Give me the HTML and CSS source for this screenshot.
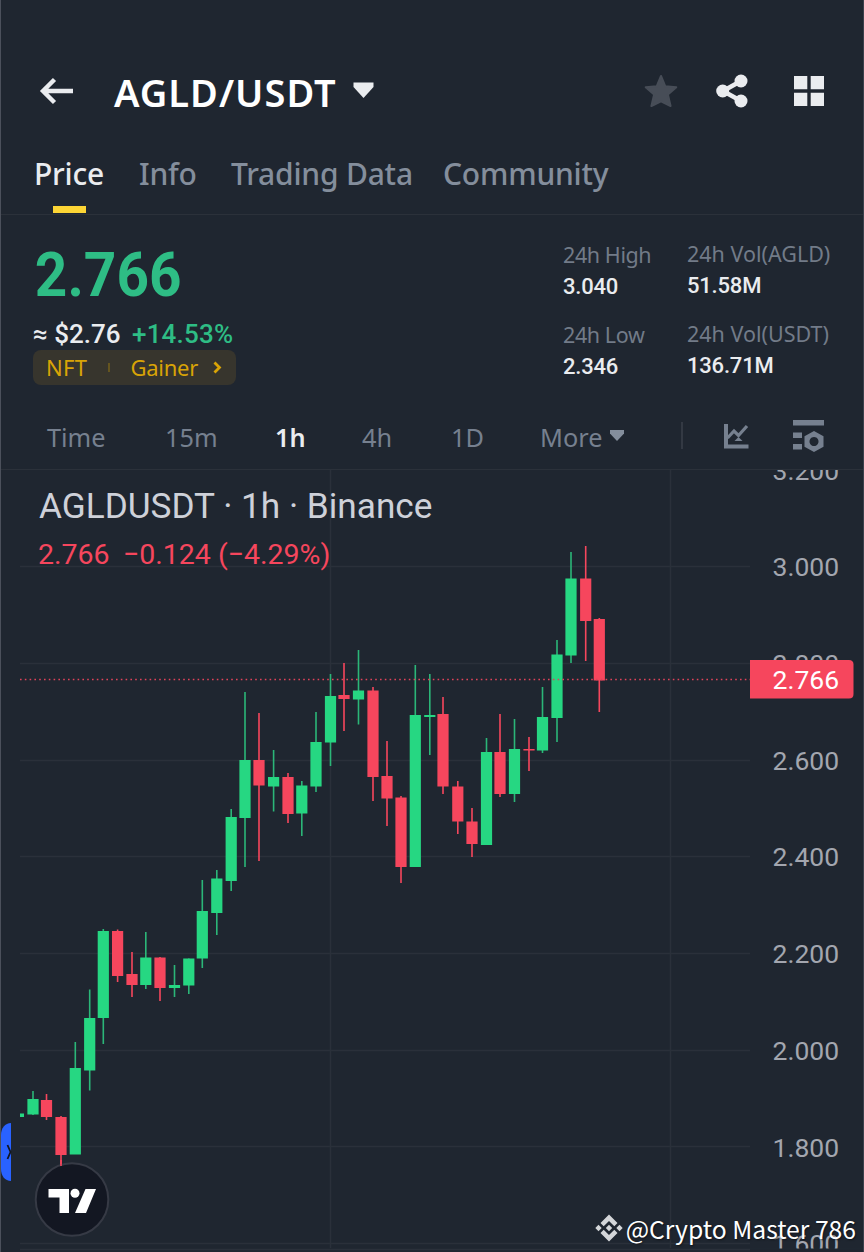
FILE: index.html
```html
<!DOCTYPE html>
<html lang="en">
<head>
    <meta charset="UTF-8">
    <meta name="viewport" content="width=device-width, initial-scale=1.0">
    <title>AGLD/USDT</title>
    <link rel="stylesheet" href="styles.css">
</head>
<body>
    <div class="app">
        <header class="header">
            <svg class="back" width="34" height="28" viewBox="0 0 34 28" fill="none" stroke="#eaecef" stroke-width="4.4">
                <path d="M34 14H4M15.500 2.500L4 14L15.500 25.500"/>
            </svg>
            <h1 class="pair">AGLD/USDT</h1>
            <svg class="caret" width="21" height="17" viewBox="0 0 21 17"><path d="M.5.500h20v4.500L10.500 16L.5 5z" fill="#eaecef"/></svg>
            <div class="actions">
                <svg width="34" height="34" viewBox="0 0 34 34"><path d="M17 2l4.300 10.300 11 .9-8.400 7.300 2.700 11.500L17 27.300 7.400 32l2.700-11.500L1.700 13.200l11-.9z" fill="#474d57" stroke="#474d57" stroke-width="2" stroke-linejoin="round"/></svg>
                <svg width="32" height="34" viewBox="0 0 32 34" fill="#eaecef"><path d="M25 7L7 17l18 10" fill="none" stroke="#eaecef" stroke-width="4.500"/><circle cx="25" cy="7" r="6.500"/><circle cx="6.700" cy="17" r="6.500"/><circle cx="25" cy="27" r="6.500"/></svg>
                <svg width="30" height="30" viewBox="0 0 30 30" fill="#eaecef"><path d="M0 0h13.300v13.300H0zM16.700 0H30v13.300H16.700zM0 16.700h13.300V30H0zM16.700 16.700H30V30H16.700z"/></svg>
            </div>
        </header>

        <nav class="tabs">
            <a class="tab tab-price active">Price</a>
            <a class="tab tab-info">Info</a>
            <a class="tab tab-data">Trading Data</a>
            <a class="tab tab-community">Community</a>
        </nav>

        <section class="ticker">
            <div class="quote">
                <div class="last">2.766</div>
                <div class="sub"><span class="approx">≈ $2.76</span><span class="change">+14.53%</span></div>
                <div class="tags">
                    <span class="nft">NFT</span>
                    <i class="tag-line"></i>
                    <span class="gainer">Gainer</span>
                    <svg width="9" height="13" viewBox="0 0 9 13"><path d="M1.500 1.500l5 5-5 5" fill="none" stroke="#d9a406" stroke-width="2.800"/></svg>
                </div>
            </div>
            <div class="stats">
                <div class="stat"><span class="label">24h High</span><span class="value">3.040</span></div>
                <div class="stat"><span class="label">24h Low</span><span class="value">2.346</span></div>
            </div>
            <div class="stats stats-vol">
                <div class="stat"><span class="label">24h Vol(AGLD)</span><span class="value">51.58M</span></div>
                <div class="stat"><span class="label">24h Vol(USDT)</span><span class="value">136.71M</span></div>
            </div>
        </section>

        <nav class="intervals">
            <span class="int int-time">Time</span>
            <span class="int int-15m">15m</span>
            <span class="int int-1h active">1h</span>
            <span class="int int-4h">4h</span>
            <span class="int int-1d">1D</span>
            <span class="int int-more">More</span>
            <svg class="more-caret" width="14" height="11" viewBox="0 0 14 11"><path d="M0 0h14v3.500L7 11 0 3.500z" fill="#848e9c"/></svg>
            <i class="divider"></i>
            <svg class="int-chart" width="25" height="26" viewBox="0 0 25 26"><path d="M2 1v22.500h22.500" fill="none" stroke="#76808f" stroke-width="4"/><path d="M3.500 15L10 8l4.500 4.500L23 3" fill="none" stroke="#76808f" stroke-width="3.200"/><path d="M14.500 14l4 4h-8z" fill="#76808f"/></svg>
            <svg class="int-settings" width="31" height="33" viewBox="0 0 31 33" fill="#76808f"><path d="M0 0h31v5.500H0zM0 12.500h9V18H0zM0 24h9v5.500H0z"/><path fill-rule="evenodd" d="M21 11l9.500 5.200v10.600L21 32l-9.500-5.200V16.200zM21 17a4.500 4.500 0 1 0 .01 0z"/></svg>
        </nav>

        <main class="chart-area">
            <svg class="chart" width="864" height="782" viewBox="0 470 864 782">
                <g class="grid">
                    <path d="M20 566.500H750M20 663.500H750M20 760.500H750M20 856.500H750M20 953.500H750M20 1050.500H750M20 1146.500H750M20 1243.500H750M20 1249.500H864"/>
                    <path d="M330.500 470V1248M670.500 470V1248"/>
                </g>
                <g class="axis">
                    <text x="772.500" y="480">3.200</text>
                    <text x="772.500" y="576">3.000</text>
                    <text x="772.500" y="673">2.800</text>
                    <text x="772.500" y="770">2.600</text>
                    <text x="772.500" y="866">2.400</text>
                    <text x="772.500" y="963">2.200</text>
                    <text x="772.500" y="1060">2.000</text>
                    <text x="772.500" y="1157">1.800</text>
                    <text x="772.500" y="1253">1.600</text>
                </g>
                <rect x="750" y="1248.500" width="114" height="4" fill="#1f2630"/>
                <g id="candles"></g>
                <path class="price-line" d="M20 679.500H750"/>
                <path d="M750 660h99q4.500 0 4.500 4.500v29.500q0 4.500-4.500 4.500h-99z" fill="#f6465d"/>
                <text class="price-tag" x="772.500" y="689">2.766</text>
                <text class="symbol" x="39" y="518">AGLDUSDT · 1h · Binance</text>
                <text class="delta" x="38" y="564">2.766</text>
                <text class="delta" x="123" y="564">−0.124 (−4.29%)</text>
                <path d="M11 1123v58C5 1181 1 1176 1 1169v-34C1 1128 5 1123 11 1123z" fill="#2962ff"/>
                <path d="M7.500 1145l3 7-3 7" fill="none" stroke="#131722" stroke-width="1.800"/>
                <circle cx="72" cy="1199.500" r="36.300" fill="#131722" stroke="#363a45" stroke-width="2"/>
                <g fill="#fff">
                    <path d="M48.500 1189H69v24H59.500v-15.500h-11zM85.500 1189H96l-10 24H75z"/>
                    <circle cx="75" cy="1193.300" r="4.500"/>
                </g>
                <path d="M61 1160v6" stroke="#f6465d" stroke-width="1.600"/>
            </svg>
            <div class="watermark">
                <svg width="28" height="28" viewBox="0 0 28 28" fill="#d4d6d9"><path d="M14 .5l8.500 8.500-3.200 3.200L14 6.900l-5.300 5.300L5.500 9zM14 27.500L5.500 19l3.200-3.200 5.300 5.300 5.300-5.300 3.200 3.200zM14 10.800l3.200 3.200-3.200 3.200-3.200-3.200zM3.500 10.800L6.700 14l-3.200 3.200L.3 14zM24.500 10.800l3.200 3.200-3.200 3.200-3.200-3.200z"/></svg>
                <span>@Crypto Master 786</span>
            </div>
        </main>
    </div>

    <script>
        // x, body top, body bottom, wick top, wick bottom, up
        const candles = [
            [33, 1099, 1114.5, 1091, 1115, 1],
            [46.5, 1100, 1117, 1094, 1120, 0],
            [61, 1117, 1155, 1116, 1166, 0],
            [75.3, 1068, 1154.5, 1042, 1154, 1],
            [89.7, 1018, 1070.5, 989.5, 1090.5, 1],
            [103.3, 931, 1018, 929, 1044, 1],
            [117.6, 931, 976, 929.5, 982, 0],
            [132, 974, 985, 952, 997, 0],
            [145.8, 957.5, 985, 932, 989, 1],
            [160, 957.5, 988, 957, 1001, 0],
            [174.5, 985, 988, 965, 997, 1],
            [188.8, 958.5, 985.5, 958.5, 994, 1],
            [202.3, 911, 958.5, 880, 968, 1],
            [216.8, 878.5, 913, 870, 935, 1],
            [231.2, 817, 881, 809, 891, 1],
            [245, 760, 818, 692, 867, 1],
            [259, 760, 785.5, 713, 861, 0],
            [273.6, 777, 786.5, 750, 811.5, 1],
            [288, 777, 814, 773, 823, 0],
            [301.8, 785.5, 813.5, 781, 836, 1],
            [316, 742, 786.5, 712, 792, 1],
            [330.5, 696, 742.5, 674, 766, 1],
            [344, 695, 699, 663, 731, 0],
            [358.5, 690.5, 699.5, 650, 724.5, 1],
            [373, 690.5, 777, 687, 801, 0],
            [387, 776, 798.5, 741, 826, 0],
            [401, 797.5, 867, 796, 883, 0],
            [415.3, 715, 867, 665, 867, 1],
            [429.8, 715, 717, 674, 755, 1],
            [443, 714, 786.5, 697, 794, 0],
            [457.8, 786.5, 821.5, 781, 834, 0],
            [472, 821.5, 844, 808, 857, 0],
            [486.5, 752, 845, 738, 845, 1],
            [500, 752, 794, 714, 797, 0],
            [514.5, 749, 794, 719, 802, 1],
            [529, 749, 750.5, 737, 771, 0],
            [542.5, 717, 750.5, 687, 753, 1],
            [557, 654.5, 718, 640, 742, 1],
            [571, 578.5, 655.5, 552, 663, 1],
            [585.7, 578.5, 621, 546, 661, 0],
            [599.3, 619, 680.5, 618, 712, 0]
        ];
        const group = document.getElementById('candles');

        function addRect(x, y, w, h, name) {
            const rect = document.createElementNS('http://www.w3.org/2000/svg', 'rect');
            rect.setAttribute('x', x);
            rect.setAttribute('y', y);
            rect.setAttribute('width', w);
            rect.setAttribute('height', h);
            rect.setAttribute('class', name);
            group.appendChild(rect);
        }

        // the first candle is cut off by the chart's left edge
        addRect(20, 1113.5, 4, 3.5, 'up');
        candles.forEach(([x, top, bottom, high, low, up]) => {
            const name = up ? 'up' : 'down';
            addRect(x - 0.8, high, 1.6, low - high, name + ' wick');
            addRect(x - 5.6, top, 11.2, bottom - top, name);
        });
    </script>
</body>
</html>
```
FILE: styles.css
```css
* {
    box-sizing: border-box;
}

body {
    margin: 0;
    background: #1f2630;
    color: #eaecef;
    font-family: "Noto Sans", sans-serif;
    overflow: hidden;
}

.app {
    width: 864px;
    height: 1252px;
    display: flex;
    flex-direction: column;
    border-left: 1px solid #4b505b;
    border-right: 1px solid #3b414c;
    overflow: hidden;
}

.header {
    height: 149px;
    padding: 32px 39px 0 38px;
    display: flex;
    align-items: center;
}

.pair {
    width: 222px;
    margin: 2px 0 0 41px;
    color: #fff;
    font-size: 38px;
    font-weight: 600;
    letter-spacing: 1px;
    line-height: 50px;
    white-space: nowrap;
}

.caret {
    margin-left: 17px;
}

.actions {
    display: flex;
    align-items: center;
    margin-left: auto;
}

.actions svg + svg {
    margin-left: 38px;
}

.actions svg:last-child {
    margin-left: 46px;
}

.tabs {
    height: 66px;
    padding-left: 33px;
    display: flex;
    border-bottom: 1px solid #2b313a;
    color: #848e9c;
    font-size: 30px;
    font-weight: 500;
    letter-spacing: -0.2px;
}

.tab {
    position: relative;
    line-height: 50px;
    white-space: nowrap;
}

.tab-price {
    width: 105px;
}

.tab-info {
    width: 92px;
}

.tab-data {
    width: 212px;
}

.tab.active {
    color: #eaecef;
}

.tab.active::after {
    content: "";
    position: absolute;
    left: 19px;
    bottom: 1px;
    width: 33px;
    height: 7px;
    background: #fcd535;
}

.ticker {
    height: 187px;
    padding: 24px 0 0 32px;
    display: flex;
}

.quote {
    width: 530px;
}

.last {
    height: 76px;
    padding-left: 2px;
    color: #2ebd85;
    font-family: Roboto, sans-serif;
    font-size: 61px;
    font-weight: 700;
    line-height: 72px;
    transform: scaleX(0.93);
    transform-origin: left;
}

.sub {
    height: 35px;
    font-family: Roboto, sans-serif;
    font-size: 26px;
    font-weight: 500;
    line-height: 38px;
    white-space: nowrap;
}

.approx {
    display: inline-block;
    width: 99px;
}

.change {
    color: #2ebd85;
    letter-spacing: 0.2px;
}

.tags {
    width: 203px;
    height: 35px;
    padding: 0 14px 1px 13px;
    display: flex;
    align-items: center;
    border-radius: 8px;
    background: #37352d;
    color: #d9a406;
    font-size: 22px;
    letter-spacing: -0.3px;
}

.nft {
    width: 62px;
    letter-spacing: 0.3px;
}

.tag-line {
    width: 2px;
    height: 9px;
    background: #65551f;
}

.gainer {
    width: 83px;
    margin-left: 21px;
}

.stats {
    width: 124px;
}

.stats-vol {
    position: relative;
    top: -1px;
}

.stat {
    height: 80px;
}

.label,
.value {
    display: block;
    height: 32px;
    line-height: 32px;
    font-size: 21.5px;
    white-space: nowrap;
}

.label {
    color: #727b88;
}

.stats:not(.stats-vol) .label {
    letter-spacing: -0.4px;
}

.value {
    font-family: Roboto, sans-serif;
    font-size: 22px;
    font-weight: 500;
    letter-spacing: -0.2px;
}

.intervals {
    height: 68px;
    padding-left: 46px;
    display: flex;
    align-items: center;
    border-bottom: 1px solid #2b313a;
    color: #76808f;
    font-size: 25.3px;
}

.int {
    padding-top: 2px;
}

.int.active {
    color: #eaecef;
    font-weight: 600;
}

.int-time {
    width: 118px;
}

.int-15m {
    width: 110px;
}

.int-1h {
    width: 87px;
}

.int-4h {
    width: 89px;
}

.int-1d {
    width: 89px;
}

.int-more {
    width: 70px;
}

.divider {
    width: 2px;
    height: 27px;
    margin-left: 57px;
    background: #333943;
}

.int-chart {
    margin-left: 41px;
}

.int-settings {
    margin-left: 44px;
    margin-top: 2px;
}

.chart-area {
    position: relative;
    height: 782px;
}

.chart {
    display: block;
    margin-left: -1px;
    font-family: Roboto, sans-serif;
}

.grid path {
    fill: none;
    stroke: #2a303a;
    stroke-width: 1.5;
}

.axis {
    fill: #a3a6af;
    font-size: 26.5px;
}

.price-tag {
    fill: #fff;
    font-size: 26.5px;
}

.price-line {
    fill: none;
    stroke: #e0435a;
    stroke-width: 1.6;
    stroke-dasharray: 1.6 3.2;
}

.up {
    fill: #26d782;
}

.down {
    fill: #f6465d;
}

.up.wick {
    fill: #2bb678;
}

.symbol {
    fill: #ced1d9;
    font-size: 35.2px;
}

.delta {
    fill: #f6465d;
    font-size: 28.5px;
}

.watermark {
    position: absolute;
    right: 7px;
    bottom: 6px;
    display: flex;
    align-items: center;
    gap: 3px;
    color: #fff;
    font-family: "Noto Sans CJK SC", sans-serif;
    font-size: 24.7px;
    line-height: 36px;
    text-shadow: 1px 1px 2px rgba(0, 0, 0, 0.5);
    white-space: nowrap;
}
```
